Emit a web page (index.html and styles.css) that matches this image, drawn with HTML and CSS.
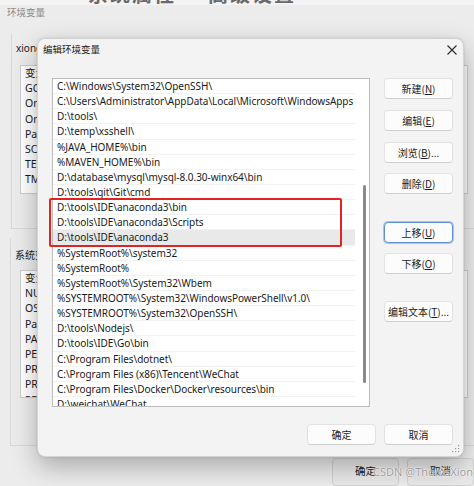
FILE: index.html
```html
<!DOCTYPE html>
<html lang="zh-CN">
<head>
<meta charset="utf-8">
<title>编辑环境变量</title>
<link rel="stylesheet" href="styles.css">
</head>
<body>
<div class="screen">
  <div class="outer">
    <div class="strip"><span class="strip-a">系统属性</span><span class="strip-b">高级设置</span></div>
    <div class="outer-title">环境变量</div>
    <div class="group g1">
      <div class="glabel">xiong 的用户变量(U)</div>
      <div class="vlist">
        <div class="vrow">变量</div>
        <div class="vrow">GOPATH</div>
        <div class="vrow">OneDrive</div>
        <div class="vrow">OneDriveConsumer</div>
        <div class="vrow">Path</div>
        <div class="vrow">SCOOP</div>
        <div class="vrow">TEMP</div>
        <div class="vrow">TMP</div>
      </div>
    </div>
    <div class="group g2">
      <div class="glabel">系统变量(S)</div>
      <div class="vlist v2">
        <div class="vrow">变量</div>
        <div class="vrow">NUMBER_OF_PROCESSORS</div>
        <div class="vrow">OS</div>
        <div class="vrow">Path</div>
        <div class="vrow">PATHEXT</div>
        <div class="vrow">PERL5LIB</div>
        <div class="vrow">PROCESSOR_ARCHITECTURE</div>
        <div class="vrow">PROCESSOR_IDENTIFIER</div>
        <div class="vrow">PROCESSOR_LEVEL</div>
      </div>
    </div>
    <div class="outer-buttons">
      <div class="obtn">确定</div>
      <div class="obtn">取消</div>
    </div>
  </div>

  <div class="dialog">
    <div class="dtitle">
      <span>编辑环境变量</span>
      <svg class="close" width="10" height="10" viewBox="0 0 10 10"><path d="M0.5 0.5 L9.5 9.5 M9.5 0.5 L0.5 9.5" stroke="#2a2a2a" stroke-width="1.1" fill="none"/></svg>
    </div>
    <div class="dbody">
      <div class="plist">
        <div class="prows">
          <div class="prow">C:\Windows\System32\OpenSSH\</div>
          <div class="prow">C:\Users\Administrator\AppData\Local\Microsoft\WindowsApps</div>
          <div class="prow">D:\tools\</div>
          <div class="prow">D:\temp\xsshell\</div>
          <div class="prow">%JAVA_HOME%\bin</div>
          <div class="prow">%MAVEN_HOME%\bin</div>
          <div class="prow">D:\database\mysql\mysql-8.0.30-winx64\bin</div>
          <div class="prow">D:\tools\git\Git\cmd</div>
          <div class="prow">D:\tools\IDE\anaconda3\bin</div>
          <div class="prow">D:\tools\IDE\anaconda3\Scripts</div>
          <div class="prow sel">D:\tools\IDE\anaconda3</div>
          <div class="prow">%SystemRoot%\system32</div>
          <div class="prow">%SystemRoot%</div>
          <div class="prow">%SystemRoot%\System32\Wbem</div>
          <div class="prow">%SYSTEMROOT%\System32\WindowsPowerShell\v1.0\</div>
          <div class="prow">%SYSTEMROOT%\System32\OpenSSH\</div>
          <div class="prow">D:\tools\Nodejs\</div>
          <div class="prow">D:\tools\IDE\Go\bin</div>
          <div class="prow">C:\Program Files\dotnet\</div>
          <div class="prow">C:\Program Files (x86)\Tencent\WeChat</div>
          <div class="prow">C:\Program Files\Docker\Docker\resources\bin</div>
          <div class="prow">D:\weichat\WeChat</div>
        </div>
        <div class="track"><div class="thumb"></div></div>
      </div>
      <div class="bcol">
        <div class="btn">新建(<u>N</u>)</div>
        <div class="btn b2">编辑(<u>E</u>)</div>
        <div class="btn b2">浏览(<u>B</u>)...</div>
        <div class="btn b3">删除(<u>D</u>)</div>
        <div class="btn b4 focus">上移(<u>U</u>)</div>
        <div class="btn b3">下移(<u>O</u>)</div>
        <div class="btn b5">编辑文本(<u>T</u>)...</div>
      </div>
    </div>
    <div class="dfoot">
      <div class="btn">确定</div>
      <div class="btn">取消</div>
    </div>
    <div class="redbox"></div>
    <svg class="grip" width="8" height="8" viewBox="0 0 8 8">
      <rect x="6" y="0" width="1.2" height="1.2" fill="#9a9a9a"/>
      <rect x="3" y="3" width="1.2" height="1.2" fill="#9a9a9a"/>
      <rect x="6" y="3" width="1.2" height="1.2" fill="#9a9a9a"/>
      <rect x="0" y="6" width="1.2" height="1.2" fill="#9a9a9a"/>
      <rect x="3" y="6" width="1.2" height="1.2" fill="#9a9a9a"/>
      <rect x="6" y="6" width="1.2" height="1.2" fill="#9a9a9a"/>
    </svg>
  </div>

  <div class="watermark">CSDN @ThomsXiong</div>
</div>
</body>
</html>
```

FILE: styles.css
```css
* { box-sizing: border-box; }
html, body { margin: 0; padding: 0; }
body { width: 474px; height: 486px; overflow: hidden; }

.screen {
  position: relative;
  width: 474px;
  height: 486px;
  overflow: hidden;
  background: #ececec;
  font-family: "Noto Sans", "Noto Sans CJK SC", sans-serif;
  color: #1b1b1b;
}

/* ---------- background window ---------- */
.outer { display: flex; flex-direction: column; height: 100%; }

.strip {
  height: 5px;
  overflow: hidden;
  background: #f4f4f4;
  display: flex;
}
.strip span {
  font-family: "Noto Sans CJK SC", sans-serif;
  font-size: 20px;
  line-height: 20px;
  margin-top: -16px;
  color: #6a6a6a;
  font-weight: 700;
  letter-spacing: 2px;
}
.strip-a { margin-left: 88px; }
.strip-b { margin-left: 32px; }

.outer-title {
  height: 19px;
  line-height: 14px;
  padding-left: 7px;
  font-family: "Noto Sans CJK SC", sans-serif;
  font-size: 9.5px;
  color: #8a8a8a;
}

.group {
  border-left: 1px solid #d8d8d8;
  border-bottom: 1px solid #d8d8d8;
  width: 480px;
  flex: none;
}
.g1 { margin: 11px 0 0 11px; height: 195px; }
.g2 { margin: 9px 0 0 10px; height: 208px; }

.glabel {
  font-size: 10px;
  line-height: 16px;
  height: 16px;
  margin-left: 4px;
  color: #1b1b1b;
  white-space: nowrap;
}
.g1 .glabel { margin-top: 6px; }
.g2 .glabel { margin-top: 9px; }

.vlist {
  margin-left: 8px;
  width: 448px;
  height: 129px;
  margin-top: 9px;
  background: #fff;
  border: 1px solid #cdcdcd;
  overflow: hidden;
}
.g1 .vlist { margin-left: 8px; }
.g2 .vlist { margin-left: 9px; margin-top: 7px; height: 128px; }

.vrow {
  height: 15.2px;
  line-height: 15.2px;
  padding-left: 4px;
  font-size: 10.5px;
  white-space: nowrap;
}

.outer-buttons {
  display: flex;
  gap: 8px;
  margin: 12px 0 0 332px;
}
.obtn {
  width: 68px;
  height: 28px;
  line-height: 24px;
  text-align: center;
  font-family: "Noto Sans CJK SC", sans-serif;
  font-size: 10.5px;
  background: #e9e9e9;
  border: 1px solid #d2d2d2;
  border-radius: 4px;
}

/* ---------- dialog ---------- */
.dialog {
  position: absolute;
  left: 37px;
  top: 38px;
  width: 427px;
  height: 419px;
  background: #f3f3f3;
  border: 1px solid #d4d4d4;
  border-radius: 8px;
  box-shadow: 0 10px 26px rgba(0, 0, 0, 0.28), 0 0 3px rgba(0, 0, 0, 0.12);
  display: flex;
  flex-direction: column;
}

.dtitle {
  height: 20px;
  line-height: 20px;
  padding: 0 6px 0 5px;
  display: flex;
  justify-content: space-between;
  align-items: center;
  font-family: "Noto Sans CJK SC", sans-serif;
  font-size: 9.5px;
  color: #1b1b1b;
}
.close { display: block; margin-top: 2px; }

.dbody {
  display: flex;
  margin-top: 19px;
  padding-left: 14px;
}

.plist {
  width: 318px;
  height: 329px;
  background: #fff;
  border: 1px solid #bdbdbd;
  overflow: hidden;
  display: flex;
}
.prows { width: 302px; flex: none; overflow: hidden; }
.prow {
  height: 15.15px;
  line-height: 15px;
  padding-left: 4px;
  font-size: 10px;
  letter-spacing: -0.04px;
  white-space: nowrap;
  color: #1a1a1a;
  border-bottom: 1px solid #f3f3f3;
}
.prow.sel { background: #e9e9e9; }

.track { flex: 1; }
.thumb {
  margin: 106px 0 0 8px;
  width: 3px;
  height: 198px;
  background: #8a8a8a;
  border-radius: 2px;
}

.bcol {
  display: flex;
  flex-direction: column;
  margin-left: 14px;
}

.btn {
  width: 69px;
  height: 21px;
  line-height: 19px;
  text-align: center;
  font-family: "Noto Sans CJK SC", sans-serif;
  font-size: 10px;
  color: #1b1b1b;
  background: #fcfcfc;
  border: 1px solid #e2e2e2;
  border-bottom-color: #cfcfcf;
  border-radius: 4px;
  white-space: nowrap;
}
.btn u { text-underline-offset: 1px; }
.b2 { margin-top: 11px; }
.b3 { margin-top: 10px; }
.b4 { margin-top: 28px; }
.b5 { margin-top: 27px; }
.btn.focus {
  border: 1px solid #5f93cf;
  box-shadow: 0 0 0 1px #a9c5e6;
}

.dfoot {
  display: flex;
  gap: 8px;
  margin: 17px 0 0 269px;
}

.redbox {
  position: absolute;
  left: 11px;
  top: 159px;
  width: 293px;
  height: 49px;
  border: 2px solid #e3231f;
  border-radius: 2px;
}

.grip {
  position: absolute;
  right: 3px;
  bottom: 3px;
}

.watermark {
  position: absolute;
  left: 373px;
  top: 465px;
  font-family: "Noto Sans", sans-serif;
  font-size: 11px;
  line-height: 14px;
  color: #9c9c9c;
  text-shadow: 0 0 2px #ffffff, 0 0 1px #ffffff;
  white-space: nowrap;
}
```
